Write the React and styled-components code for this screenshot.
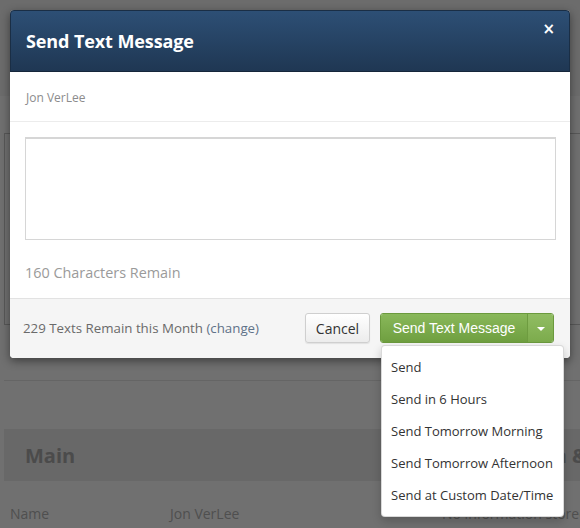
import React from "react";
import styled, { createGlobalStyle } from "styled-components";

const GlobalStyle = createGlobalStyle`
  html, body { margin: 0; padding: 0; }
  body {
    width: 580px;
    height: 528px;
    overflow: hidden;
    background: #ffffff;
    font-family: "Open Sans", "Liberation Sans", Arial, sans-serif;
  }
  * { box-sizing: border-box; }
`;

/* ---------- page behind the modal ---------- */

const Page = styled.div`
  position: relative;
  width: 580px;
  height: 528px;
  overflow: hidden;
  background: #ffffff;
`;

const TopBar = styled.div`
  height: 97px;
  background: #f6f6f6;
  border-bottom: 1px solid #ffffff;
`;

const Content = styled.div`
  display: flex;
  flex-direction: column;
  padding: 0 0 0 4px;
`;

const Card = styled.div`
  margin-top: 36px;
  height: 192px;
  border: 1px solid #c8c8c8;
  border-right: none;
`;

const Rule = styled.div`
  margin-top: 55px;
  height: 1px;
  background: #e6e6e6;
`;

const SectionHead = styled.div`
  margin-top: 48px;
  margin-right: -7px;
  height: 52px;
  background: #ececec;
  display: flex;
  align-items: center;
  justify-content: space-between;
  padding: 0 0 0 21px;
  font-size: 20px;
  font-weight: 700;
  color: #ababab;
  white-space: nowrap;
`;

const Row = styled.div`
  display: flex;
  align-items: center;
  height: 64px;
  padding-left: 6px;
  font-size: 14px;
  color: #b5b5b5;
  white-space: nowrap;
`;

const Cell = styled.span`
  width: ${(p) => p.$w}px;
  flex: none;
`;

const Overlay = styled.div`
  position: absolute;
  inset: 0;
  background: rgba(0, 0, 0, 0.56);
`;

/* ---------- modal ---------- */

const Dialog = styled.div`
  position: absolute;
  left: 10px;
  top: 10px;
  width: 560px;
  border-radius: 4px;
  background: #ffffff;
  box-shadow: 0 3px 10px rgba(0, 0, 0, 0.45);
  display: flex;
  flex-direction: column;
`;

const Header = styled.div`
  height: 62px;
  border-radius: 4px 4px 0 0;
  background: linear-gradient(#2d4f75, #1f3753);
  border: 1px solid #1a2e45;
  border-bottom: 1px solid #15263a;
  display: flex;
  align-items: center;
  justify-content: space-between;
  padding: 0 15px 0 15px;
`;

const Title = styled.h3`
  margin: 0;
  font-size: 18px;
  font-weight: 700;
  color: #ffffff;
  letter-spacing: -0.1px;
`;

const Close = styled.span`
  align-self: flex-start;
  margin-top: 11px;
  margin-right: -1px;
  font-family: "DejaVu Sans", sans-serif;
  font-size: 15px;
  font-weight: 700;
  color: #ffffff;
  line-height: 1;
`;

const Recipient = styled.div`
  height: 50px;
  display: flex;
  align-items: center;
  padding: 2px 16px 0;
  border-bottom: 1px solid #ececec;
  font-size: 12px;
  color: #8c8c8c;
`;

const Compose = styled.div`
  padding: 15px 14px 0 15px;
  display: flex;
  flex-direction: column;
  height: 176px;
`;

const MessageBox = styled.textarea`
  display: block;
  width: 531px;
  height: 103px;
  resize: none;
  border: 1px solid #d6d6d6;
  border-top: 2px solid #d6d6d6;
  border-radius: 0;
  outline: none;
  background: #ffffff;
`;

const Counter = styled.div`
  margin-top: 23px;
  font-size: 14.4px;
  color: #9a9a9a;
`;

const Footer = styled.div`
  height: 60px;
  border-top: 1px solid #e2e2e2;
  background: #f5f5f5;
  border-radius: 0 0 4px 4px;
  display: flex;
  align-items: center;
  padding: 0 16px 1px 13px;
`;

const Quota = styled.div`
  flex: 1;
  font-size: 13.3px;
  color: #6a6a6a;
`;

const ChangeLink = styled.span`
  color: #5f7288;
`;

const Actions = styled.div`
  display: flex;
  gap: 10px;
  position: relative;
`;

const CancelButton = styled.button`
  height: 30px;
  width: 65px;
  border: 1px solid #cfcfcf;
  border-radius: 3px;
  background: linear-gradient(#ffffff, #ececec);
  box-shadow: 0 1px 1px rgba(0, 0, 0, 0.08);
  font-family: "Open Sans", sans-serif;
  font-size: 14px;
  color: #333333;
  padding: 0;
`;

const Split = styled.div`
  display: flex;
  height: 30px;
  border: 1px solid #6b9a3d;
  border-radius: 3px;
  overflow: hidden;
`;

const SendButton = styled.button`
  width: 147px;
  border: none;
  border-right: 1px solid #6e9c40;
  background: linear-gradient(#89b85a, #6f9f40);
  font-family: "Liberation Sans", Arial, sans-serif;
  font-size: 14px;
  color: #ffffff;
  padding: 0 0 1px 0;
`;

const CaretButton = styled.button`
  width: 25px;
  border: none;
  background: linear-gradient(#91bd63, #7cab4c);
  display: flex;
  align-items: center;
  justify-content: center;
  padding: 2px 0 0 0;
`;

const Caret = styled.span`
  width: 0;
  height: 0;
  border-left: 4px solid transparent;
  border-right: 4px solid transparent;
  border-top: 4px solid #ffffff;
`;

const Menu = styled.ul`
  position: absolute;
  left: 76px;
  top: 32px;
  width: 183px;
  margin: 0;
  padding: 5px 0;
  list-style: none;
  background: #ffffff;
  border: 1px solid rgba(0, 0, 0, 0.15);
  border-radius: 4px;
  box-shadow: 0 4px 10px rgba(0, 0, 0, 0.2);
`;

const MenuItem = styled.li`
  height: 32px;
  display: flex;
  align-items: center;
  padding: 0 9px;
  font-size: 13px;
  color: #333333;
  white-space: nowrap;
`;

const options = [
  "Send",
  "Send in 6 Hours",
  "Send Tomorrow Morning",
  "Send Tomorrow Afternoon",
  "Send at Custom Date/Time",
];

export default function App() {
  return (
    <>
      <GlobalStyle />
      <Page>
        <TopBar />
        <Content>
          <Card />
          <Rule />
          <SectionHead>
            <span>Main</span>
            <span>Information &amp;</span>
          </SectionHead>
          <Row>
            <Cell $w={160}>Name</Cell>
            <Cell $w={272}>Jon VerLee</Cell>
            <Cell $w={200}>No information stored</Cell>
          </Row>
        </Content>
        <Overlay />
        <Dialog>
          <Header>
            <Title>Send Text Message</Title>
            <Close>×</Close>
          </Header>
          <Recipient>Jon VerLee</Recipient>
          <Compose>
            <MessageBox />
            <Counter>160 Characters Remain</Counter>
          </Compose>
          <Footer>
            <Quota>
              229 Texts Remain this Month <ChangeLink>(change)</ChangeLink>
            </Quota>
            <Actions>
              <CancelButton>Cancel</CancelButton>
              <Split>
                <SendButton>Send Text Message</SendButton>
                <CaretButton>
                  <Caret />
                </CaretButton>
              </Split>
              <Menu>
                {options.map((o) => (
                  <MenuItem key={o}>{o}</MenuItem>
                ))}
              </Menu>
            </Actions>
          </Footer>
        </Dialog>
      </Page>
    </>
  );
}
